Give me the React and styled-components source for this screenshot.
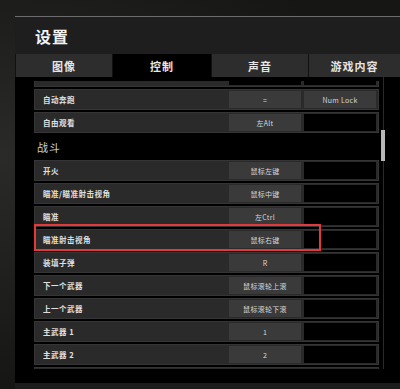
import React from 'react';
import styled, { createGlobalStyle } from 'styled-components';

const GlobalStyle = createGlobalStyle`
  html, body {
    margin: 0;
    padding: 0;
    background: #1b1b1a;
    overflow: hidden;
  }
  * { box-sizing: border-box; }
`;

const FONT = `"Noto Sans CJK SC", "Noto Sans", "Liberation Sans", sans-serif`;

const tabs = ['图像', '控制', '声音', '游戏内容'];

const rowsTop = [
  { label: '', key1: '', key2: '' },
  { label: '自动奔跑', key1: '=', key2: 'Num Lock' },
  { label: '自由观看', key1: '左Alt', key2: '' },
];

const rowsFight = [
  { label: '开火', key1: '鼠标左键', key2: '' },
  { label: '瞄准/瞄准射击视角', key1: '鼠标中键', key2: '' },
  { label: '瞄准', key1: '左Ctrl', key2: '' },
  { label: '瞄准射击视角', key1: '鼠标右键', key2: '', marked: true },
  { label: '装填子弹', key1: 'R', key2: '' },
  { label: '下一个武器', key1: '鼠标滚轮上滚', key2: '' },
  { label: '上一个武器', key1: '鼠标滚轮下滚', key2: '' },
  { label: '主武器 1', key1: '1', key2: '' },
  { label: '主武器 2', key1: '2', key2: '' },
  { label: '副武器', key1: '3', key2: '' },
];

function Row({ label, key1, key2, marked }) {
  return (
    <RowBox>
      <Label>{label}</Label>
      <KeyBox $empty={!key1}>{key1}</KeyBox>
      <KeyBox $empty={!key2}>{key2}</KeyBox>
      {marked && <Highlight />}
    </RowBox>
  );
}

export default function App() {
  return (
    <Page>
      <GlobalStyle />
      <Window>
        <TitleBar>设置</TitleBar>
        <Tabs>
          {tabs.map((t, i) => (
            <Tab key={t} $active={i === 1}>{t}</Tab>
          ))}
        </Tabs>
        <Body>
          <ListViewport>
            <List>
              {rowsTop.map((r, i) => <Row key={'t' + i} {...r} />)}
              <Section>战斗</Section>
              {rowsFight.map((r, i) => <Row key={'f' + i} {...r} />)}
            </List>
          </ListViewport>
          <ScrollTrack>
            <ScrollThumb />
          </ScrollTrack>
        </Body>
        <Footer />
      </Window>
    </Page>
  );
}

const Page = styled.div`
  width: 400px;
  height: 389px;
  padding: 16px 0 0 15px;
  background:
    radial-gradient(ellipse at 0% 40%, #2a2a28 0%, #161615 70%),
    #1b1b1a;
  font-family: ${FONT};
`;

const Window = styled.div`
  height: 373px;
  border-top: 1px solid #6c6c6a;
  background: #000;
  display: flex;
  flex-direction: column;
`;

const TitleBar = styled.div`
  height: 37px;
  background: #1e1e1e;
  color: #f2f2f2;
  font-size: 16px;
  font-weight: 700;
  padding-left: 20px;
  display: flex;
  align-items: center;
  letter-spacing: 1px;
`;

const Tabs = styled.div`
  display: grid;
  grid-template-columns: 96px 98px 96px 1fr;
  column-gap: 1px;
  height: 23px;
  padding-left: 1px;
  background: #111;
`;

const Tab = styled.div`
  background: ${p => (p.$active ? '#000' : '#2d2d2d')};
  color: #e6e6e6;
  font-size: 11px;
  font-weight: 700;
  letter-spacing: 1px;
  display: flex;
  align-items: center;
  justify-content: center;
`;

const Body = styled.div`
  display: flex;
  padding-left: 19px;
`;

const ListViewport = styled.div`
  width: 345px;
  height: 288px;
  margin-top: 4px;
  overflow: hidden;
`;

const List = styled.div`
  margin-top: -15px;
  display: flex;
  flex-direction: column;
  gap: 2px;
`;

const RowBox = styled.div`
  position: relative;
  height: 21px;
  background: #2a2a2a;
  border: 1px solid #353535;
  display: flex;
  align-items: center;
  gap: 3px;
  padding-right: 2px;
`;

const Label = styled.div`
  flex: 1;
  padding-left: 8px;
  color: #e0e0e0;
  font-size: 7.5px;
  font-weight: 700;
  letter-spacing: 0.5px;
  white-space: nowrap;
`;

const KeyBox = styled.div`
  width: 72px;
  height: 17px;
  background: ${p => (p.$empty ? '#000' : '#3a3a3a')};
  color: #d8d8d8;
  font-size: 7px;
  display: flex;
  align-items: center;
  justify-content: center;
  letter-spacing: 0.3px;
`;

const Highlight = styled.div`
  position: absolute;
  left: -1px;
  top: -6px;
  width: 287px;
  height: 27px;
  border: 2px solid #e23a3a;
  pointer-events: none;
`;

const Section = styled.div`
  height: 23px;
  padding-left: 3px;
  display: flex;
  align-items: center;
  color: #cfcfcf;
  font-size: 11px;
  letter-spacing: 1px;
`;

const ScrollTrack = styled.div`
  margin-left: 2px;
  width: 4px;
  height: 292px;
  display: flex;
  justify-content: center;
  padding-top: 53px;
  background: linear-gradient(#2a2a2a, #2a2a2a) center / 1px 100% no-repeat;
`;

const ScrollThumb = styled.div`
  width: 4px;
  height: 31px;
  background: #b8b8b8;
`;

const Footer = styled.div`
  margin-top: auto;
  height: 6px;
  background: #1c1c1c;
`;
